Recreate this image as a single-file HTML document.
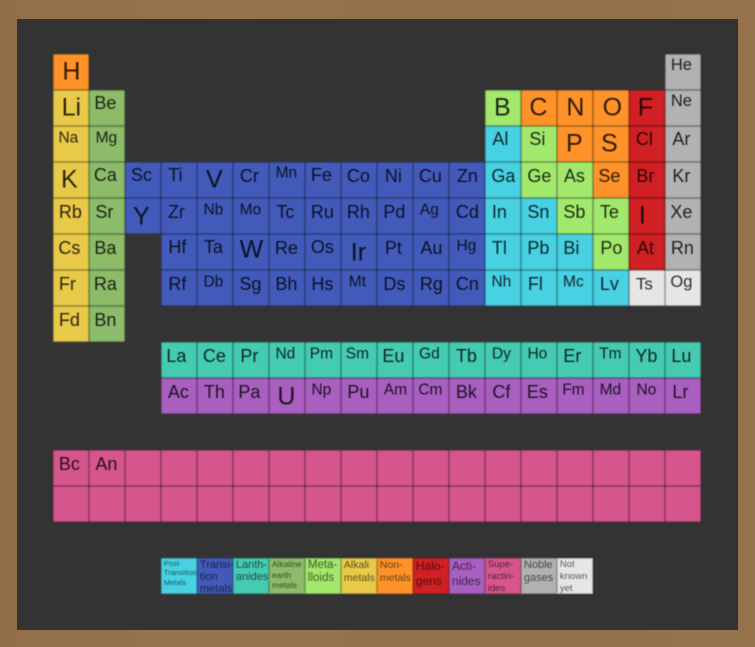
<!DOCTYPE html>
<html><head><meta charset="utf-8"><style>
html,body{margin:0;padding:0}
body{width:755px;height:647px;overflow:hidden;position:relative;background:#93704a;font-family:"Liberation Sans",sans-serif}
#w{position:absolute;left:0;top:0;width:755px;height:647px;background:linear-gradient(90deg,#936f49,#96734c 30%,#91704a 60%,#95724b);}
#b{position:absolute;left:17px;top:19px;width:721px;height:611px;background:#333}
#p{position:absolute;left:.4px;top:0;width:755px;height:647px;filter:blur(.5px)}
.c{position:absolute;background-image:linear-gradient(90deg,rgba(0,0,0,.27) 1px,transparent 1px,transparent 35px,rgba(0,0,0,.27) 35px),linear-gradient(rgba(0,0,0,.27) 1px,transparent 1px,transparent 35px,rgba(0,0,0,.27) 35px);background-size:36px 36px}
.o{background-color:#ff9329}.a{background-color:#e8c948}.e{background-color:#8cbb6a}.t{background-color:#425bbb}.q{background-color:#48d1e3}.m{background-color:#a2e86c}.h{background-color:#d02024}.n{background-color:#b2b2b2}.u{background-color:#e6e6e6}.l{background-color:#45cbb2}.k{background-color:#a85fc0}.s{background-color:#d6558d}
#p b{position:absolute;font-weight:400;line-height:1;transform:translate(-50%,-50%);color:rgba(0,0,0,.82);font-size:18px;white-space:nowrap}
#p b.g{font-size:25px}
#p b.f{font-size:15.5px}
.d{position:absolute;top:558px;width:36px;height:36px;overflow:hidden;box-sizing:border-box;box-shadow:inset 0 0 0 1px rgba(0,0,0,.22)}
.d span{position:absolute;left:2.5px;white-space:pre;color:rgba(0,0,0,.62)}
</style></head><body>
<div id="w"></div><div id="b"></div>
<div id="p">
<div class="c o" style="left:53px;top:54px;width:36px;height:36px"></div>
<div class="c a" style="left:53px;top:90px;width:36px;height:252px"></div>
<div class="c e" style="left:89px;top:90px;width:36px;height:252px"></div>
<div class="c n" style="left:665px;top:54px;width:36px;height:216px"></div>
<div class="c t" style="left:125px;top:162px;width:360px;height:72px"></div>
<div class="c t" style="left:161px;top:234px;width:324px;height:72px"></div>
<div class="c m" style="left:485px;top:90px;width:36px;height:36px"></div>
<div class="c o" style="left:521px;top:90px;width:108px;height:36px"></div>
<div class="c h" style="left:629px;top:90px;width:36px;height:180px"></div>
<div class="c q" style="left:485px;top:126px;width:36px;height:108px"></div>
<div class="c m" style="left:521px;top:126px;width:36px;height:72px"></div>
<div class="c o" style="left:557px;top:126px;width:72px;height:36px"></div>
<div class="c m" style="left:557px;top:162px;width:36px;height:36px"></div>
<div class="c o" style="left:593px;top:162px;width:36px;height:36px"></div>
<div class="c q" style="left:521px;top:198px;width:36px;height:36px"></div>
<div class="c m" style="left:557px;top:198px;width:72px;height:36px"></div>
<div class="c q" style="left:485px;top:234px;width:108px;height:36px"></div>
<div class="c m" style="left:593px;top:234px;width:36px;height:36px"></div>
<div class="c q" style="left:485px;top:270px;width:144px;height:36px"></div>
<div class="c u" style="left:629px;top:270px;width:72px;height:36px"></div>
<div class="c l" style="left:161px;top:342px;width:540px;height:36px"></div>
<div class="c k" style="left:161px;top:378px;width:540px;height:36px"></div>
<div class="c s" style="left:53px;top:450px;width:648px;height:72px"></div>

<b class="g" style="left:71px;top:72px">H</b><b class="g" style="left:71px;top:108px">Li</b><b class="f" style="left:68px;top:138px">Na</b><b class="g" style="left:69px;top:180px">K</b><b style="left:70px;top:212px">Rb</b><b style="left:69px;top:248px">Cs</b><b style="left:67px;top:284px">Fr</b><b style="left:69px;top:320px">Fd</b>
<b style="left:105px;top:103px">Be</b><b class="f" style="left:106px;top:138px">Mg</b><b style="left:105px;top:175px">Ca</b><b style="left:104px;top:212px">Sr</b><b style="left:105px;top:248px">Ba</b><b style="left:105px;top:284px">Ra</b><b style="left:105px;top:320px">Bn</b>
<b style="left:141px;top:175px">Sc</b><b class="g" style="left:141px;top:217px">Y</b>
<b style="left:175px;top:175px">Ti</b><b style="left:176px;top:212px">Zr</b><b style="left:177px;top:247px">Hf</b><b style="left:177px;top:284px">Rf</b>
<b class="g" style="left:214px;top:180px">V</b><b class="f" style="left:213px;top:210px">Nb</b><b style="left:213px;top:247px">Ta</b><b class="f" style="left:213px;top:282px">Db</b>
<b style="left:249px;top:176px">Cr</b><b class="f" style="left:250px;top:210px">Mo</b><b class="g" style="left:251px;top:250px">W</b><b style="left:250px;top:284px">Sg</b>
<b class="f" style="left:286px;top:173px">Mn</b><b style="left:285px;top:212px">Tc</b><b style="left:286px;top:248px">Re</b><b style="left:286px;top:284px">Bh</b>
<b style="left:321px;top:175px">Fe</b><b style="left:322px;top:212px">Ru</b><b style="left:322px;top:247px">Os</b><b style="left:322px;top:284px">Hs</b>
<b style="left:358px;top:176px">Co</b><b style="left:358px;top:212px">Rh</b><b class="g" style="left:358px;top:253px">Ir</b><b class="f" style="left:357px;top:282px">Mt</b>
<b style="left:393px;top:176px">Ni</b><b style="left:394px;top:212px">Pd</b><b style="left:393px;top:248px">Pt</b><b style="left:394px;top:284px">Ds</b>
<b style="left:430px;top:176px">Cu</b><b class="f" style="left:429px;top:210px">Ag</b><b style="left:431px;top:248px">Au</b><b style="left:431px;top:284px">Rg</b>
<b style="left:467px;top:176px">Zn</b><b style="left:467px;top:212px">Cd</b><b class="f" style="left:466px;top:246px">Hg</b><b style="left:467px;top:284px">Cn</b>
<b class="g" style="left:502px;top:108px">B</b><b class="g" style="left:538px;top:108px">C</b><b class="g" style="left:575px;top:108px">N</b><b class="g" style="left:612px;top:108px">O</b><b class="g" style="left:645px;top:108px">F</b>
<b class="f" style="left:681px;top:65px;font-size:16.5px">He</b><b class="f" style="left:681px;top:101px;font-size:16.5px">Ne</b>
<b style="left:500px;top:139px">Al</b><b style="left:537px;top:139px">Si</b><b class="g" style="left:574px;top:144px">P</b><b class="g" style="left:609px;top:144px">S</b><b style="left:644px;top:139px">Cl</b><b style="left:681px;top:139px">Ar</b>
<b style="left:503px;top:176px">Ga</b><b style="left:539px;top:176px">Ge</b><b style="left:574px;top:176px">As</b><b style="left:609px;top:176px">Se</b><b style="left:645px;top:176px">Br</b><b style="left:681px;top:176px">Kr</b>
<b style="left:499px;top:212px">In</b><b style="left:538px;top:212px">Sn</b><b style="left:574px;top:212px">Sb</b><b style="left:609px;top:212px">Te</b><b class="g" style="left:642px;top:216px">I</b><b style="left:681px;top:212px">Xe</b>
<b style="left:499px;top:248px">Tl</b><b style="left:538px;top:248px">Pb</b><b style="left:571px;top:248px">Bi</b><b style="left:611px;top:248px">Po</b><b style="left:645px;top:248px">At</b><b style="left:682px;top:248px">Rn</b>
<b class="f" style="left:501px;top:282px">Nh</b><b style="left:535px;top:284px">Fl</b><b class="f" style="left:573px;top:282px">Mc</b><b style="left:609px;top:284px">Lv</b><b class="f" style="left:644px;top:284px;font-size:17px">Ts</b><b class="f" style="left:681px;top:282px;font-size:16.5px">Og</b>
<b style="left:176px;top:356px">La</b><b style="left:214px;top:356px">Ce</b><b style="left:249px;top:356px">Pr</b><b class="f" style="left:285px;top:354px">Nd</b><b class="f" style="left:321px;top:354px">Pm</b><b class="f" style="left:357px;top:354px">Sm</b><b style="left:393px;top:356px">Eu</b><b class="f" style="left:429px;top:354px">Gd</b><b style="left:466px;top:356px">Tb</b><b class="f" style="left:501px;top:354px">Dy</b><b class="f" style="left:537px;top:354px">Ho</b><b style="left:572px;top:356px">Er</b><b class="f" style="left:610px;top:354px">Tm</b><b style="left:646px;top:356px">Yb</b><b style="left:681px;top:356px">Lu</b>
<b style="left:178px;top:392px">Ac</b><b style="left:214px;top:392px">Th</b><b style="left:249px;top:392px">Pa</b><b class="g" style="left:286px;top:397px">U</b><b class="f" style="left:321px;top:390px">Np</b><b style="left:358px;top:392px">Pu</b><b class="f" style="left:395px;top:390px">Am</b><b class="f" style="left:430px;top:390px">Cm</b><b style="left:466px;top:392px">Bk</b><b style="left:501px;top:392px">Cf</b><b style="left:537px;top:392px">Es</b><b class="f" style="left:573px;top:390px">Fm</b><b class="f" style="left:610px;top:390px">Md</b><b class="f" style="left:646px;top:390px">No</b><b style="left:680px;top:392px">Lr</b>
<b style="left:69px;top:464px">Bc</b><b style="left:106px;top:464px">An</b>

<div class="d q" style="left:161px"><span style="font-size:7.5px;top:1px;line-height:9.4px">Post-
Transition
Metals</span></div>
<div class="d t" style="left:197px"><span style="font-size:11px;top:1px;line-height:12px">Transi-
tion
metals</span></div>
<div class="d l" style="left:233px"><span style="font-size:11px;top:1px;line-height:12px">Lanth-
anides</span></div>
<div class="d e" style="left:269px"><span style="font-size:8.5px;top:1px;line-height:10.5px">Alkaline
earth
metals</span></div>
<div class="d m" style="left:305px"><span style="font-size:11.5px;top:1px;line-height:13px">Meta-
lloids</span></div>
<div class="d a" style="left:341px"><span style="font-size:10.5px;top:1px;line-height:13px">Alkali
metals</span></div>
<div class="d o" style="left:377px"><span style="font-size:10.5px;top:1px;line-height:13px">Non-
metals</span></div>
<div class="d h" style="left:413px"><span style="font-size:12px;top:1px;line-height:15px">Halo-
gens</span></div>
<div class="d k" style="left:449px"><span style="font-size:12px;top:1px;line-height:15px">Acti-
nides</span></div>
<div class="d s" style="left:485px"><span style="font-size:9.5px;top:1px;line-height:12px">Supe-
ractin-
ides</span></div>
<div class="d n" style="left:521px"><span style="font-size:11px;top:1px;line-height:13px">Noble
gases</span></div>
<div class="d u" style="left:557px"><span style="font-size:9.5px;top:1px;line-height:12px">Not
known
yet</span></div>
</div>
</body></html>
